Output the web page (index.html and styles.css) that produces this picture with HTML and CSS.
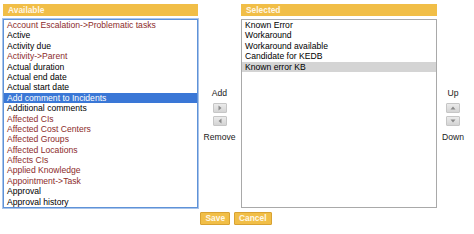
FILE: index.html
```html
<!DOCTYPE html>
<html>
<head>
<meta charset="utf-8">
<link rel="stylesheet" href="styles.css">
</head>
<body>
<div class="picker">
  <div class="column">
    <div class="head">Available</div>
    <div class="box box-focus">
      <div class="row ref">Account Escalation-&gt;Problematic tasks</div>
      <div class="row">Active</div>
      <div class="row">Activity due</div>
      <div class="row ref">Activity-&gt;Parent</div>
      <div class="row">Actual duration</div>
      <div class="row">Actual end date</div>
      <div class="row">Actual start date</div>
      <div class="row sel">Add comment to Incidents</div>
      <div class="row">Additional comments</div>
      <div class="row ref">Affected CIs</div>
      <div class="row ref">Affected Cost Centers</div>
      <div class="row ref">Affected Groups</div>
      <div class="row ref">Affected Locations</div>
      <div class="row ref">Affects CIs</div>
      <div class="row ref">Applied Knowledge</div>
      <div class="row ref">Appointment-&gt;Task</div>
      <div class="row">Approval</div>
      <div class="row">Approval history</div>
    </div>
  </div>
  <div class="ctrl ctrl-mid">
    <div class="lbl">Add</div>
    <div class="arrow-btn"><svg width="6" height="6" viewBox="0 0 6 6"><path d="M1.5 0.5 L4.5 3 L1.5 5.5 Z" fill="#8a8a8a"/></svg></div>
    <div class="arrow-btn"><svg width="6" height="6" viewBox="0 0 6 6"><path d="M4.5 0.5 L1.5 3 L4.5 5.5 Z" fill="#8a8a8a"/></svg></div>
    <div class="lbl">Remove</div>
  </div>
  <div class="column column-right">
    <div class="head">Selected</div>
    <div class="box">
      <div class="row">Known Error</div>
      <div class="row">Workaround</div>
      <div class="row">Workaround available</div>
      <div class="row">Candidate for KEDB</div>
      <div class="row cur">Known error KB</div>
    </div>
  </div>
  <div class="ctrl ctrl-side">
    <div class="lbl">Up</div>
    <div class="arrow-btn"><svg width="6" height="6" viewBox="0 0 6 6"><path d="M0.5 4.5 L3 1.5 L5.5 4.5 Z" fill="#8a8a8a"/></svg></div>
    <div class="arrow-btn"><svg width="6" height="6" viewBox="0 0 6 6"><path d="M0.5 1.5 L3 4.5 L5.5 1.5 Z" fill="#8a8a8a"/></svg></div>
    <div class="lbl">Down</div>
  </div>
</div>
<div class="actions">
  <button class="btn">Save</button>
  <button class="btn">Cancel</button>
</div>
</body>
</html>
```
FILE: styles.css
```css
html, body {
  margin: 0;
  padding: 0;
  background: #ffffff;
}
body {
  font-family: "Liberation Sans", Arial, sans-serif;
  font-size: 8.6px;
  color: #000;
  padding-top: 4px;
  width: 474px;
  height: 234px;
  overflow: hidden;
}
.picker {
  display: flex;
  align-items: stretch;
  padding-left: 3px;
}
.column {
  width: 195px;
  display: flex;
  flex-direction: column;
}
.column-right {
  width: 196px;
}
.head {
  height: 12px;
  line-height: 12px;
  background: #f1be47;
  color: #fff6e4;
  font-weight: bold;
  font-size: 8.4px;
  padding-left: 5px;
  margin-bottom: 3px;
}
.box {
  height: 187px;
  border: 1px solid #a9a9a9;
  overflow: hidden;
  background: #fff;
}
.box-focus {
  border-color: #5e92d8;
  box-shadow: 0 0 0 1px #a9c4ea;
}
.row {
  height: 10.4px;
  line-height: 10.4px;
  padding-left: 3px;
  white-space: nowrap;
}
.ref {
  color: #8c2b2b;
}
.sel {
  background: #3a77d6;
  color: #fff;
}
.cur {
  background: #d4d4d4;
}
.ctrl {
  display: flex;
  flex-direction: column;
  align-items: center;
  justify-content: center;
  gap: 3px;
  padding-top: 17px;
}
.ctrl-mid {
  width: 43px;
}
.ctrl-side {
  width: 32px;
}
.lbl {
  line-height: 10px;
  color: #1a1a1a;
}
.arrow-btn {
  width: 12px;
  height: 8px;
  display: flex;
  align-items: center;
  justify-content: center;
  background: linear-gradient(#ebebeb, #d4d4d4);
  border: 1px solid #c6c6c6;
  border-radius: 1px;
}
.lbl + .arrow-btn {
  margin-top: 2px;
}
.arrow-btn + .lbl {
  margin-top: 3px;
}
.actions {
  display: flex;
  justify-content: center;
  gap: 4px;
  margin-top: 4px;
  padding-right: 2px;
}
.btn {
  height: 13px;
  padding: 0 4px;
  font-family: "Liberation Sans", Arial, sans-serif;
  font-size: 8.4px;
  font-weight: bold;
  color: #fff8e8;
  background: #f1be47;
  border: 1px solid #d8a232;
  border-radius: 1px;
  line-height: 11px;
}
```
